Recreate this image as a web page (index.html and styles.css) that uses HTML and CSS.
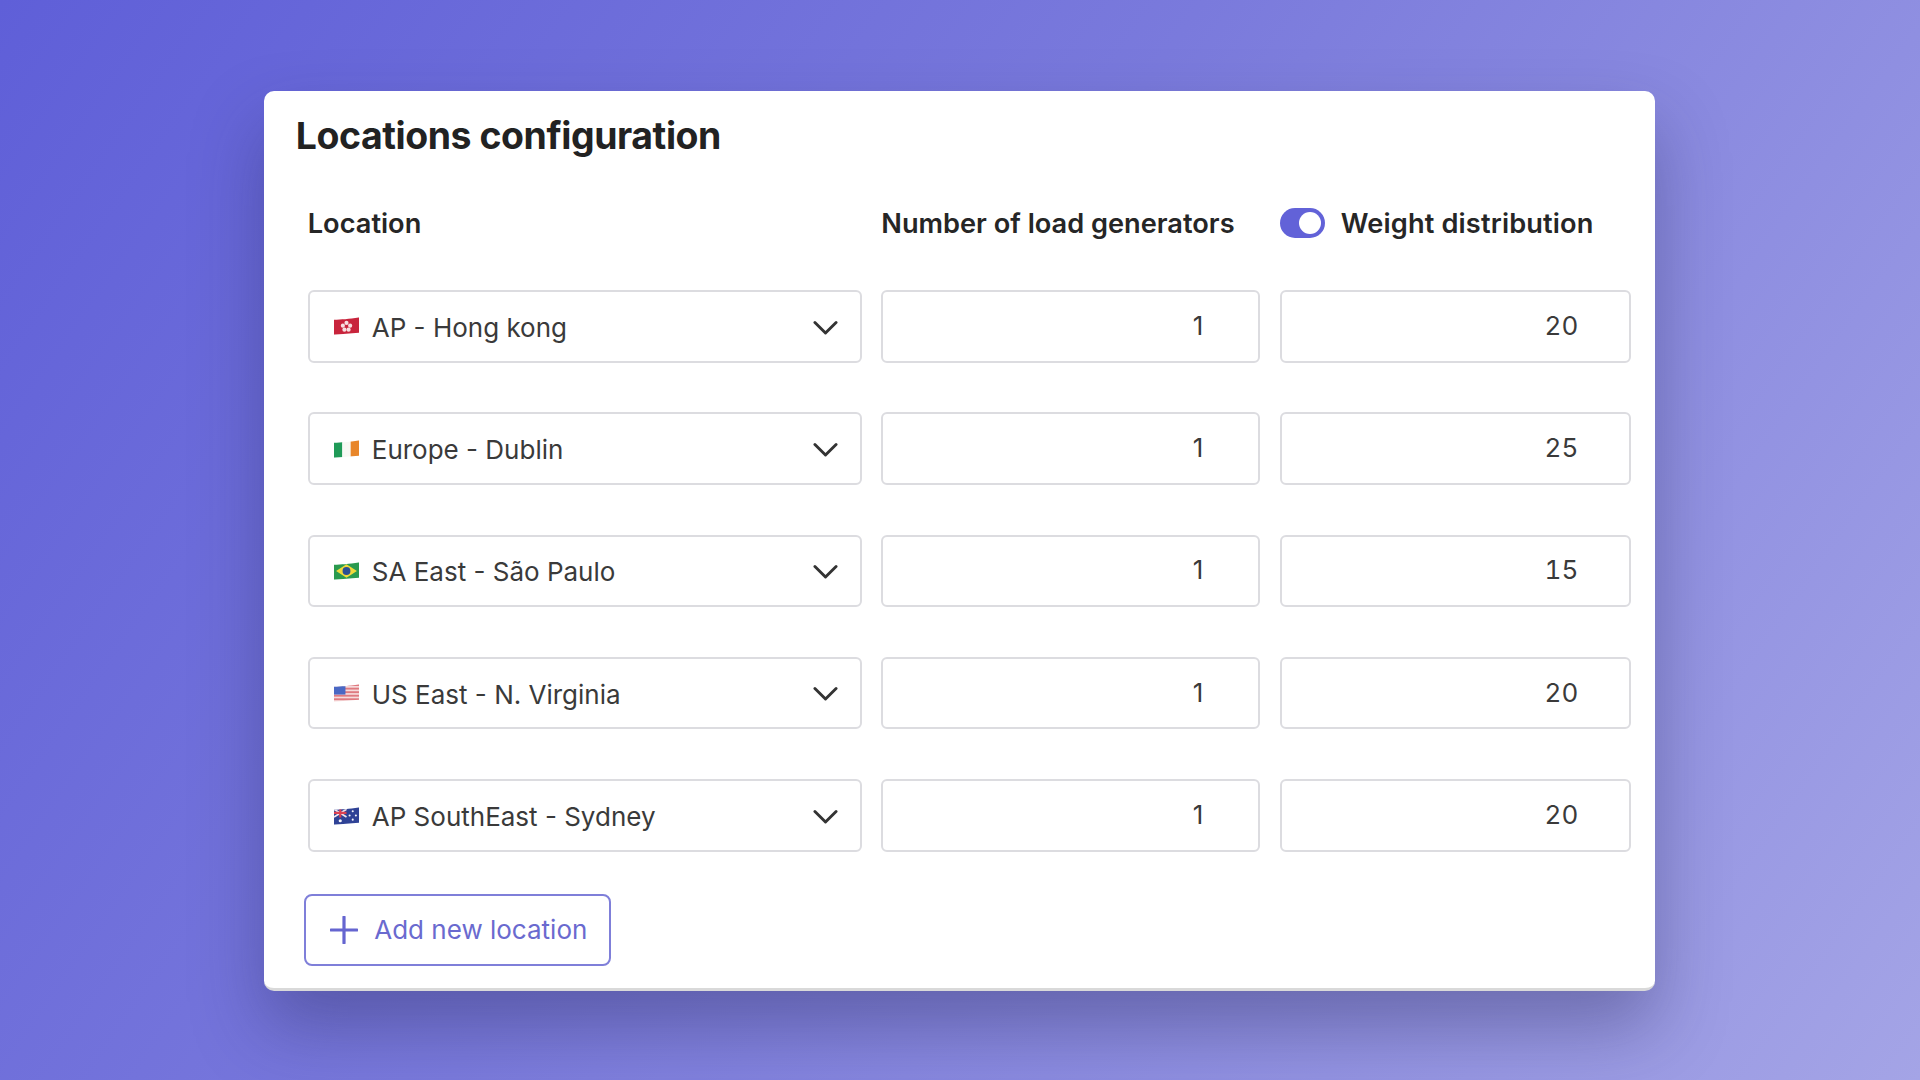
FILE: index.html
```html
<!DOCTYPE html>
<html lang="en">
<head>
<meta charset="utf-8">
<title>Locations configuration</title>
<link rel="stylesheet" href="styles.css">
</head>
<body>
<main class="card">
  <h1 class="title">Locations configuration</h1>
  <div class="grid">
    <div class="head">Location</div>
    <div class="head">Number of load generators</div>
    <div class="head head-toggle"><span class="toggle"><span class="knob"></span></span>Weight distribution</div>

    <div class="field select">
      <svg class="flag" viewBox="0 0 24 19"><defs><clipPath id="c1"><path d="M0 3.5C7 3 14 3 24 1V16C15 17 8 17 0 18Z"/></clipPath></defs><g clip-path="url(#c1)"><rect width="24" height="19" fill="#c8243c"/><g fill="#f7dfe0"><circle cx="12" cy="6.5" r="2"/><circle cx="8.5" cy="9.2" r="2"/><circle cx="15.5" cy="9.2" r="2"/><circle cx="10" cy="13" r="2"/><circle cx="14" cy="13" r="2"/></g><circle cx="12" cy="10" r="1" fill="#c8243c"/></g></svg>
      <span class="label">AP - Hong kong</span>
      <svg class="chev" viewBox="0 0 26 16"><path d="M2 2.5L13 13.5L24 2.5"/></svg>
    </div>
    <div class="field num gen">1</div>
    <div class="field num">20</div>

    <div class="field select">
      <svg class="flag" viewBox="0 0 24 19"><defs><clipPath id="c2"><path d="M0 3.5C7 3 14 3 24 1V16C15 17 8 17 0 18Z"/></clipPath></defs><g clip-path="url(#c2)"><rect width="8" height="19" fill="#1f9a57"/><rect x="8" width="8" height="19" fill="#f8f8f4"/><rect x="16" width="8" height="19" fill="#e8862a"/></g></svg>
      <span class="label">Europe - Dublin</span>
      <svg class="chev" viewBox="0 0 26 16"><path d="M2 2.5L13 13.5L24 2.5"/></svg>
    </div>
    <div class="field num gen">1</div>
    <div class="field num">25</div>

    <div class="field select">
      <svg class="flag" viewBox="0 0 24 19"><defs><clipPath id="c3"><path d="M0 3.5C7 3 14 3 24 1V16C15 17 8 17 0 18Z"/></clipPath></defs><g clip-path="url(#c3)"><rect width="24" height="19" fill="#2a9a4e"/><path d="M12 3L22 9.5L12 16L2 9.5Z" fill="#f0d93a"/><circle cx="12" cy="9.5" r="3.8" fill="#2b4f94"/></g></svg>
      <span class="label">SA East - São Paulo</span>
      <svg class="chev" viewBox="0 0 26 16"><path d="M2 2.5L13 13.5L24 2.5"/></svg>
    </div>
    <div class="field num gen">1</div>
    <div class="field num">15</div>

    <div class="field select">
      <svg class="flag" viewBox="0 0 24 19"><defs><clipPath id="c4"><path d="M0 3.5C7 3 14 3 24 1V16C15 17 8 17 0 18Z"/></clipPath></defs><g clip-path="url(#c4)"><rect width="24" height="19" fill="#f6dcdc"/><g fill="#df7a80"><rect y="1" width="24" height="1.8"/><rect y="4.4" width="24" height="1.8"/><rect y="7.8" width="24" height="1.8"/><rect y="11.2" width="24" height="1.8"/><rect y="14.6" width="24" height="1.8"/></g><rect width="11" height="11" fill="#4a68c4"/></g></svg>
      <span class="label">US East - N. Virginia</span>
      <svg class="chev" viewBox="0 0 26 16"><path d="M2 2.5L13 13.5L24 2.5"/></svg>
    </div>
    <div class="field num gen">1</div>
    <div class="field num">20</div>

    <div class="field select">
      <svg class="flag" viewBox="0 0 24 19"><defs><clipPath id="c5"><path d="M0 3.5C7 3 14 3 24 1V16C15 17 8 17 0 18Z"/></clipPath></defs><g clip-path="url(#c5)"><rect width="24" height="19" fill="#2f4296"/><path d="M0 3L12 10.5M12 3L0 10.5" stroke="#f2e4e8" stroke-width="1.6"/><path d="M6 2V11M0 6.5H12" stroke="#dc4050" stroke-width="2"/><circle cx="6" cy="14" r="1.5" fill="#f4f4fa"/><circle cx="18" cy="5" r="1" fill="#f4f4fa"/><circle cx="15" cy="9" r="1" fill="#f4f4fa"/><circle cx="21" cy="9" r="1" fill="#f4f4fa"/><circle cx="18" cy="13" r="1" fill="#f4f4fa"/></g></svg>
      <span class="label">AP SouthEast - Sydney</span>
      <svg class="chev" viewBox="0 0 26 16"><path d="M2 2.5L13 13.5L24 2.5"/></svg>
    </div>
    <div class="field num gen">1</div>
    <div class="field num">20</div>
  </div>
  <button class="add" type="button">
    <svg class="plus" viewBox="0 0 28 28"><path d="M14 1V27M1 14H27"/></svg>
    Add new location
  </button>
</main>
</body>
</html>
```

FILE: styles.css
```css
* { box-sizing: border-box; }
html, body { height: 100%; }
body {
  margin: 0;
  display: flex;
  align-items: center;
  justify-content: center;
  background: linear-gradient(125deg, #5f5fd8 0%, #7a7adc 45%, #a4a4e6 100%);
  font-family: Inter, "Liberation Sans", sans-serif;
  color: #262626;
}
.card {
  width: 1390.5px;
  height: 900px;
  margin: 1px 1px 0 0;
  background: #fff;
  border-radius: 10px;
  border-bottom: 3px solid #d9d9d9;
  padding: 21px 24px 0 31.5px;
  box-shadow: 0 36px 70px rgba(40, 40, 90, 0.38);
}
.title {
  margin: 0;
  font-size: 37.4px;
  line-height: 48px;
  font-weight: 700;
  letter-spacing: -0.42px;
  color: #222;
}
.grid {
  display: grid;
  grid-template-columns: 554px 379px 351.5px;
  grid-template-rows: 34px repeat(5, 72.5px);
  column-gap: 19.5px;
  row-gap: 49.8px;
  margin: 46.8px 0 0 12px;
}
.head {
  display: flex;
  align-items: center;
  font-size: 27.2px;
  font-weight: 600;
  color: #262626;
}
.head-toggle { gap: 16px; letter-spacing: 0.15px; }
.toggle {
  width: 45px;
  height: 30px;
  border-radius: 15px;
  background: #6262d8;
  display: flex;
  align-items: center;
  justify-content: flex-end;
  padding-right: 4px;
}
.knob {
  width: 22px;
  height: 22px;
  border-radius: 50%;
  background: #fff;
}
.field {
  border: 2px solid #dcdce0;
  border-radius: 6px;
  display: flex;
  align-items: center;
  font-size: 26px;
  background: #fff;
  color: #3a3a3a;
}
.select { padding: 2px 22px 0 25px; }
.flag { width: 25px; height: 20px; flex: none; margin: -2px 13px 0 -1px; }
.label { flex: 1; }
.chev { width: 25px; height: 15.5px; flex: none; }
.chev path { fill: none; stroke: #333; stroke-width: 3; stroke-linecap: round; stroke-linejoin: round; }
.num { justify-content: flex-end; padding: 0 51px 2px 0; font-variant-numeric: tabular-nums; }
.gen { padding-right: 55px; font-variant-numeric: normal; }
.add {
  display: flex;
  align-items: center;
  gap: 16px;
  width: 307.5px;
  height: 72px;
  margin: 42px 0 0 8px;
  padding: 0 0 0 24.5px;
  background: #fff;
  border: 2px solid #7f7fd9;
  border-radius: 8px;
  font-family: inherit;
  font-size: 26px;
  color: #6a6acf;
}
.plus { width: 28px; height: 28px; flex: none; }
.plus path { fill: none; stroke: #6565d0; stroke-width: 3.2; stroke-linecap: round; }
```
